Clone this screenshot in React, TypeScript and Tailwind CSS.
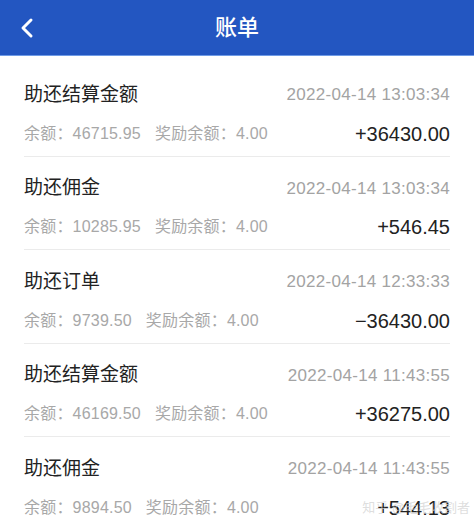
const rows = [
  { title: "助还结算金额", time: "2022-04-14 13:03:34", balance: "46715.95", bonus: "4.00", amount: "+36430.00" },
  { title: "助还佣金", time: "2022-04-14 13:03:34", balance: "10285.95", bonus: "4.00", amount: "+546.45" },
  { title: "助还订单", time: "2022-04-14 12:33:33", balance: "9739.50", bonus: "4.00", amount: "−36430.00" },
  { title: "助还结算金额", time: "2022-04-14 11:43:55", balance: "46169.50", bonus: "4.00", amount: "+36275.00" },
  { title: "助还佣金", time: "2022-04-14 11:43:55", balance: "9894.50", bonus: "4.00", amount: "+544.13" },
];

export default function App() {
  return (
    <div
      className="relative w-[474px] h-[529px] overflow-hidden bg-white"
      style={{ fontFamily: '"Liberation Sans", "Noto Sans CJK SC", sans-serif' }}
    >
      <header className="relative flex h-[56px] items-center justify-center bg-[#2356c1] border-b border-[#6f9be6]">
        <svg className="absolute left-[18px] top-[17px]" width="18" height="22" viewBox="0 0 18 22" fill="none">
          <path d="M13 3 L5 11 L13 19" stroke="white" strokeWidth="3" strokeLinecap="round" strokeLinejoin="round" />
        </svg>
        <h1 className="text-[22px] font-medium text-white leading-none">账单</h1>
      </header>

      <div className="px-6 pt-[7px]">
        {rows.map((r, i) => (
          <div key={i} className="border-b border-[#ebebeb] pt-[19px] pb-[9px]">
            <div className="flex h-[26px] items-center justify-between">
              <span className="text-[19px] text-[#222]">{r.title}</span>
              <span className="text-[17px] tracking-[0.3px] text-[#a3a3a3]">{r.time}</span>
            </div>
            <div className="mt-[12.5px] flex h-[26px] items-center justify-between">
              <span className="text-[16px] tracking-[0.2px] text-[#a8a8a8]">
                余额：{r.balance}
                <span className="ml-[14px]">奖励余额：{r.bonus}</span>
              </span>
              <span className="text-[20px] text-[#222]">{r.amount}</span>
            </div>
          </div>
        ))}
      </div>

      <div className="absolute right-[4px] bottom-[12px] text-[13px] text-[#cfcfcf]/70">知乎 @毛毛收割者</div>
    </div>
  );
}
